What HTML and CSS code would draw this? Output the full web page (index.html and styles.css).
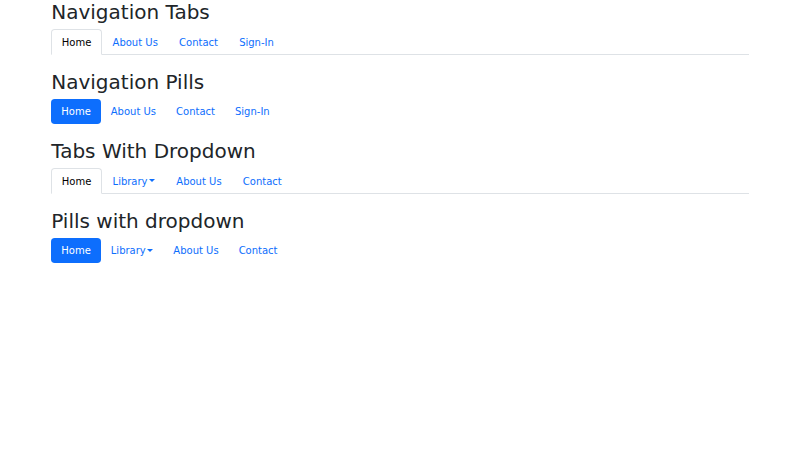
FILE: index.html
```html
<!DOCTYPE html>
<html lang="en">
<head>
<meta charset="utf-8">
<title>Navs</title>
<link rel="stylesheet" href="styles.css">
</head>
<body>
<div class="container">
  <section class="section">
    <h2 class="title">Navigation Tabs</h2>
    <ul class="nav nav-tabs">
      <li><a class="nav-link active" href="#">Home</a></li>
      <li><a class="nav-link" href="#">About Us</a></li>
      <li><a class="nav-link" href="#">Contact</a></li>
      <li><a class="nav-link" href="#">Sign-In</a></li>
    </ul>
  </section>
  <section class="section">
    <h2 class="title">Navigation Pills</h2>
    <ul class="nav nav-pills">
      <li><a class="nav-link active" href="#">Home</a></li>
      <li><a class="nav-link" href="#">About Us</a></li>
      <li><a class="nav-link" href="#">Contact</a></li>
      <li><a class="nav-link" href="#">Sign-In</a></li>
    </ul>
  </section>
  <section class="section">
    <h2 class="title">Tabs With Dropdown</h2>
    <ul class="nav nav-tabs">
      <li><a class="nav-link active" href="#">Home</a></li>
      <li><a class="nav-link dropdown-toggle" href="#">Library</a></li>
      <li><a class="nav-link" href="#">About Us</a></li>
      <li><a class="nav-link" href="#">Contact</a></li>
    </ul>
  </section>
  <section class="section">
    <h2 class="title">Pills with dropdown</h2>
    <ul class="nav nav-pills">
      <li><a class="nav-link active" href="#">Home</a></li>
      <li><a class="nav-link dropdown-toggle" href="#">Library</a></li>
      <li><a class="nav-link" href="#">About Us</a></li>
      <li><a class="nav-link" href="#">Contact</a></li>
    </ul>
  </section>
</div>
</body>
</html>
```

FILE: styles.css
```css
* { box-sizing: border-box; }
html, body {
  margin: 0;
  padding: 0;
  background: #fff;
}
body {
  font-family: "DejaVu Sans", sans-serif;
  font-size: 10px;
  line-height: 15px;
  color: #212529;
}
.container {
  max-width: 712.5px;
  margin: 0 auto;
  padding: 0 7.5px;
}
.section {
  margin-bottom: 15px;
}
.title {
  margin: 0 0 5px 0;
  font-size: 20px;
  line-height: 24px;
  font-weight: 500;
  color: #212529;
}
.nav {
  display: flex;
  flex-wrap: wrap;
  list-style: none;
  margin: 0;
  padding: 0;
}
.nav-link {
  display: block;
  padding: 5px 10px;
  font-size: 10px;
  line-height: 15px;
  color: #0d6efd;
  text-decoration: none;
}
.nav-tabs {
  border-bottom: 1px solid #dee2e6;
}
.nav-tabs .nav-link {
  padding: 4.5px 9.6px;
  margin-bottom: -1px;
  border: 1px solid transparent;
  border-top-left-radius: 3.75px;
  border-top-right-radius: 3.75px;
}
.nav-tabs .nav-link.active {
  color: #000;
  background: #fff;
  border-color: #dee2e6 #dee2e6 #fff;
}
.nav-pills .nav-link {
  border-radius: 3.75px;
}
.nav-pills .nav-link.active {
  color: #fff;
  background: #0d6efd;
}
.dropdown-toggle::after {
  display: inline-block;
  margin-left: 1.6px;
  vertical-align: 2.5px;
  content: "";
  border-top: 3px solid;
  border-right: 3px solid transparent;
  border-left: 3px solid transparent;
  border-bottom: 0;
}
```
